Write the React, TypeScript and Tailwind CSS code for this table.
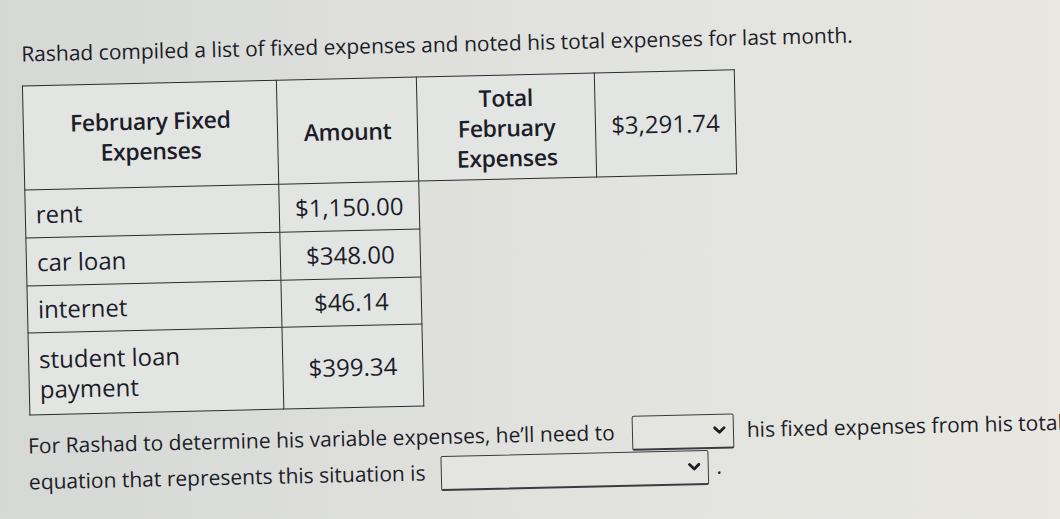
import React from "react";

function Chevron() {
  return (
    <svg width="13" height="9" viewBox="0 0 13 9" className="shrink-0">
      <path d="M1.8 2 L6.5 6.6 L11.2 2" fill="none" stroke="#1d1e26" strokeWidth="2.8" strokeLinecap="round" strokeLinejoin="round" />
    </svg>
  );
}

function Select({ w }: { w: string }) {
  return (
    <div className={`${w} h-[35px] flex items-center justify-end pr-[7px] border-[1.5px] border-[#3a3b40] border-b-[2px] rounded-[2px] bg-[#e4e5e1]`}>
      <Chevron />
    </div>
  );
}

export default function App() {
  const th = "border-[1.5px] border-[#2b2c30] font-semibold text-[23px] tracking-[-0.3px] text-center align-middle leading-[30px]";
  const td = "border-[1.5px] border-[#2b2c30] align-middle leading-[30px] text-[24px]";
  return (
    <div className="w-[1060px] h-[519px] overflow-hidden bg-linear-to-r from-[#d6d8d5] via-[#e1e2de] to-[#e8e7e2] text-[#1c1d29] font-['Open_Sans',sans-serif] font-medium text-[21px]">
      <div className="w-full h-full -rotate-[1.3deg] pl-[26px] pt-[27px]">
        <div className="leading-[30px] whitespace-nowrap">
          Rashad compiled a list of fixed expenses and noted his total expenses for last month.
        </div>
        <table className="mt-[17px] border-collapse table-fixed w-[712px]">
          <tbody>
            <tr className="h-[104px] bg-[#e3e5e2]">
              <th className={`${th} w-[254px]`}>February Fixed<br />Expenses</th>
              <th className={`${th} w-[140px]`}>Amount</th>
              <th className={`${th} w-[178px]`}>Total<br />February<br />Expenses</th>
              <td className={`${td} w-[140px] text-center`}>$3,291.74</td>
            </tr>
            <tr className="h-[48px]">
              <td className={`${td} pl-[10px] bg-[#e3e5e2]`}>rent</td>
              <td className={`${td} text-center bg-[#e3e5e2]`}>$1,150.00</td>
            </tr>
            <tr className="h-[48px]">
              <td className={`${td} pl-[10px] bg-[#e3e5e2]`}>car loan</td>
              <td className={`${td} text-center bg-[#e3e5e2]`}>$348.00</td>
            </tr>
            <tr className="h-[47px]">
              <td className={`${td} pl-[10px] bg-[#e3e5e2]`}>internet</td>
              <td className={`${td} text-center bg-[#e3e5e2]`}>$46.14</td>
            </tr>
            <tr className="h-[82px]">
              <td className={`${td} pl-[10px] bg-[#e3e5e2]`}>student loan<br />payment</td>
              <td className={`${td} text-center bg-[#e3e5e2]`}>$399.34</td>
            </tr>
          </tbody>
        </table>
        <div className="mt-[13px] -ml-[2px] whitespace-nowrap">
          <div className="h-[36px] flex items-center">
            <span>For Rashad to determine his variable expenses, he’ll need to</span>
            <div className="ml-[17px] mr-[13px]"><Select w="w-[102px]" /></div>
            <span>his fixed expenses from his total expenses. The</span>
          </div>
          <div className="h-[36px] flex items-center">
            <span>equation that represents this situation is</span>
            <div className="ml-[15px] mr-[8px]"><Select w="w-[268px]" /></div>
            <span>.</span>
          </div>
        </div>
      </div>
    </div>
  );
}
